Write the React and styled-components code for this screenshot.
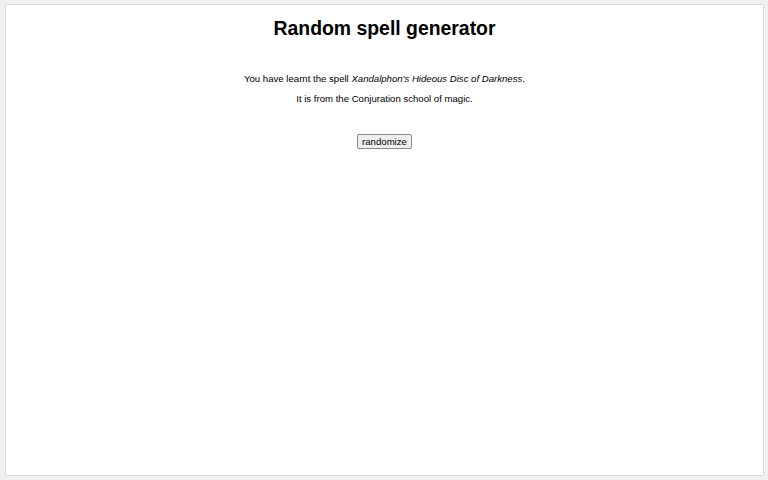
import React, { useState } from 'react';
import styled, { createGlobalStyle } from 'styled-components';

const GlobalStyle = createGlobalStyle`
  html, body {
    margin: 0;
    padding: 0;
    background: #f1f1f1;
    font-family: "Liberation Sans", Arial, sans-serif;
  }
`;

const Page = styled.div`
  box-sizing: border-box;
  height: 480px;
  padding: 4px 4px 4px 5px;
`;

const Card = styled.main`
  box-sizing: border-box;
  height: 100%;
  background: #fff;
  border: 1px solid #dcdcdc;
  text-align: center;
  color: #000;
`;

const Title = styled.h1`
  margin: 12px 0 34px;
  font-size: 19.4px;
  font-weight: 700;
  line-height: 22px;
`;

const Line = styled.p`
  margin: 0 0 8px;
  font-size: 9.6px;
  line-height: 12px;
`;

const Spell = styled.em`
  font-style: italic;
`;

const Button = styled.button`
  margin-top: 21px;
  padding: 0 4px;
  height: 15px;
  font-family: "Liberation Sans", Arial, sans-serif;
  font-size: 9.6px;
  line-height: 12px;
  color: #000;
  background: #efefef;
  border: 1px solid #8a8a8a;
  border-radius: 2px;
`;

const spells = [
  { name: "Xandalphon's Hideous Disc of Darkness", school: 'Conjuration' },
  { name: "Mordrek's Shimmering Veil of Echoes", school: 'Illusion' },
  { name: "Tasvara's Ember Lance", school: 'Evocation' },
];

export default function App() {
  const [index, setIndex] = useState(0);
  const spell = spells[index];

  return (
    <>
      <GlobalStyle />
      <Page>
        <Card>
          <Title>Random spell generator</Title>
          <Line>
            You have learnt the spell <Spell>{spell.name}</Spell>.
          </Line>
          <Line>It is from the {spell.school} school of magic.</Line>
          <Button onClick={() => setIndex((index + 1) % spells.length)}>randomize</Button>
        </Card>
      </Page>
    </>
  );
}
